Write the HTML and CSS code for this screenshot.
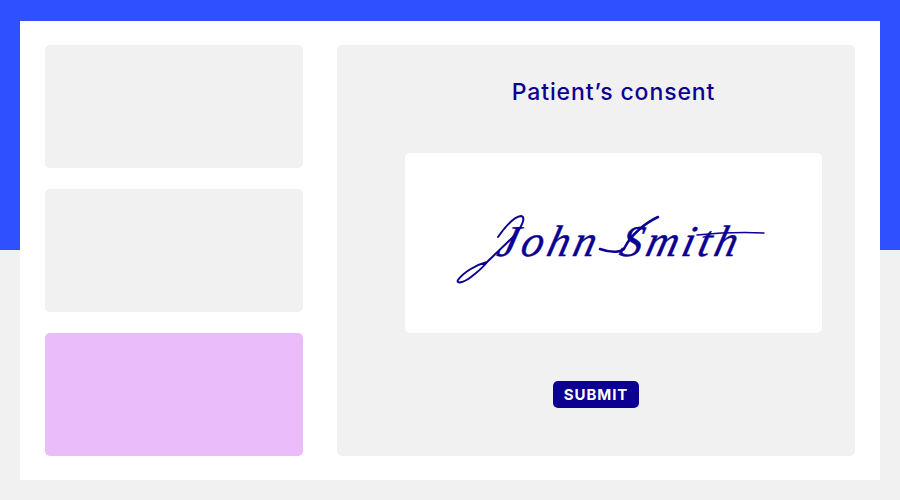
FILE: index.html
```html
<!DOCTYPE html>
<html lang="en">
<head>
    <meta charset="UTF-8">
    <title>Patient's consent</title>
    <link rel="stylesheet" href="styles.css">
</head>
<body>

    <!-- Main Card -->
    <div class="card">

        <!-- Left Column -->
        <div class="side">
            <div class="tile"></div>
            <div class="tile"></div>
            <div class="tile tile-pink"></div>
        </div>

        <!-- Consent Panel -->
        <div class="panel">
            <div class="consent">
                <h2 class="title">Patient’s consent</h2>
                <div class="sign-box">
                    <span class="signature">John Smith</span>
                    <svg class="flourish" width="417" height="180" viewBox="0 0 417 180" fill="none" stroke="#0c0090" stroke-linecap="round">
                        <path d="M93 84C100 74 108 64 116 63 122 64 116 76 106 86L82 109C70 112 58 120 53 127 51 131 58 130 66 124 74 118 80 112 83 108" stroke-width="2"/>
                        <path d="M253 64C240 70 226 82 220 94 218 100 206 100 195 96" stroke-width="2.5"/>
                        <path d="M292 82C312 80 338 79 359 80" stroke-width="1.5"/>
                    </svg>
                </div>
            </div>
            <button class="submit">SUBMIT</button>
        </div>

    </div>

</body>
</html>
```

FILE: styles.css
```css
/* Global Styles */
body {
    margin: 0;
    height: 500px;
    padding: 21px 20px 20px;
    box-sizing: border-box;
    overflow: hidden;
    background: linear-gradient(#2f50ff 250px, #f1f1f1 250px);
    font-family: Inter, "Liberation Sans", sans-serif;
}

/* Main Card */
.card {
    height: 100%;
    padding: 24px 25px;
    box-sizing: border-box;
    display: flex;
    gap: 34px;
    background: #fff;
}

/* Left Column */
.side {
    width: 258px;
    display: flex;
    flex-direction: column;
    gap: 21px;
}

.tile {
    flex: 1;
    background: #f1f1f1;
    border-radius: 5px;
}

.tile-pink {
    background: #ebbcfa;
}

/* Consent Panel */
.panel {
    flex: 1;
    display: flex;
    flex-direction: column;
    align-items: center;
    background: #f1f1f1;
    border-radius: 5px;
}

.consent {
    width: 417px;
    margin: 0 33px 0 68px;
}

.title {
    height: 108px;
    margin: 0;
    padding-top: 33px;
    box-sizing: border-box;
    color: #0c0090;
    font-size: 23px;
    font-weight: 500;
    line-height: 28px;
    letter-spacing: 0.9px;
    text-align: center;
}

/* Signature */
.sign-box {
    position: relative;
    height: 180px;
    padding: 0 0 4px 14px;
    box-sizing: border-box;
    display: flex;
    justify-content: center;
    align-items: center;
    background: #fff;
    border-radius: 5px;
}

.signature {
    color: #0c0090;
    font-family: "Liberation Serif", serif;
    font-size: 44px;
    font-style: italic;
    letter-spacing: 4px;
    word-spacing: 6px;
    white-space: nowrap;
    -webkit-text-stroke: 0.4px #0c0090;
    transform: skewX(-14deg);
}

.flourish {
    position: absolute;
    top: 0;
    left: 0;
}

/* Submit Button */
.submit {
    width: 86px;
    height: 27px;
    margin-top: 48px;
    padding: 0;
    background: #0c0090;
    color: #fff;
    border: none;
    border-radius: 5px;
    font-family: Inter, "Liberation Sans", sans-serif;
    font-size: 15px;
    font-weight: 700;
    letter-spacing: 0.9px;
}
```
